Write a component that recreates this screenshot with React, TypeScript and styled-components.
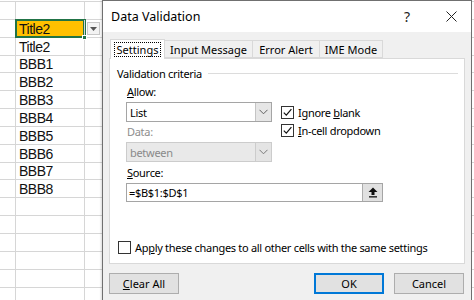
import React from "react";
import styled, { createGlobalStyle } from "styled-components";

const Global = createGlobalStyle`
  html, body { margin: 0; padding: 0; background: #fff; overflow: hidden; }
  #root { width: 474px; height: 300px; }
  * { box-sizing: border-box; }
`;

const Screen = styled.div`
  position: relative;
  width: 474px;
  height: 300px;
  overflow: hidden;
  background: #fff;
`;

const Sheet = styled.div`
  display: flex;
  flex-direction: column;
  padding-top: 1px;
  font-family: "Liberation Sans", Arial, sans-serif;
  font-size: 14px;
  letter-spacing: -0.5px;
  color: #111;
`;

const Row = styled.div`
  display: flex;
  height: 17.85px;
  flex: none;
  border-top: 1px solid #d6d6d6;
`;

const CellA = styled.div`
  width: 16px;
  flex: none;
  border-right: 1px solid #d6d6d6;
`;

const CellB = styled.div<{ $selected?: boolean }>`
  position: relative;
  width: 69px;
  flex: none;
  border-right: 1px solid #d6d6d6;
  padding: 0 0 0 3px;
  display: flex;
  align-items: flex-end;
  padding-bottom: 0px;
  line-height: 16px;
  background: ${(p) => (p.$selected ? "#ffc000" : "transparent")};
  box-shadow: ${(p) => (p.$selected ? "0 0 0 1px #217346, inset 0 0 0 1px #217346" : "none")};
  z-index: ${(p) => (p.$selected ? 1 : 0)};
`;

const Handle = styled.span`
  position: absolute;
  right: -3px;
  bottom: -3px;
  width: 5px;
  height: 5px;
  background: #217346;
  border: 1px solid #fff;
`;

const CellC = styled.div`
  flex: 1;
`;

const CellDrop = styled.div`
  position: absolute;
  left: 87px;
  top: 22px;
  width: 13px;
  height: 13px;
  background: #f3f3f3;
  border: 1px solid #c8c8c8;
  display: flex;
  align-items: center;
  justify-content: center;
  z-index: 2;
`;

const Dialog = styled.div`
  position: absolute;
  left: 102px;
  top: 0;
  width: 370px;
  height: 304px;
  background: #f0f0f0;
  border: 1px solid #707070;
  box-shadow: -1px 0 2px rgba(0, 0, 0, 0.15);
  display: flex;
  flex-direction: column;
  font-family: "Noto Sans", "Open Sans", sans-serif;
  font-size: 11px;
  letter-spacing: -0.3px;
  color: #000;
  z-index: 5;
`;

const TitleBar = styled.div`
  height: 31px;
  flex: none;
  background: #fff;
  display: flex;
  align-items: center;
  padding-left: 8px;
`;

const TitleText = styled.div`
  flex: 1;
  font-size: 12.5px;
  letter-spacing: 0;
`;

const TitleBtn = styled.div<{ $w: number }>`
  width: ${(p) => p.$w}px;
  height: 31px;
  display: flex;
  align-items: center;
  justify-content: center;
  font-size: 14px;
  color: #222;
`;

const Body = styled.div`
  flex: 1;
  display: flex;
  flex-direction: column;
  padding: 7px 7px 0 6px;
`;

const Tabs = styled.div`
  display: flex;
  align-items: flex-end;
  height: 19px;
  padding-left: 1px;
  position: relative;
  z-index: 1;
`;

const Tab = styled.div<{ $active?: boolean; $w: number }>`
  width: ${(p) => p.$w}px;
  height: ${(p) => (p.$active ? 20 : 18)}px;
  margin-bottom: ${(p) => (p.$active ? -1 : 0)}px;
  background: ${(p) => (p.$active ? "#fff" : "#f0f0f0")};
  border: 1px solid #d9d9d9;
  border-bottom: ${(p) => (p.$active ? "none" : "1px solid #d9d9d9")};
  margin-right: -1px;
  display: flex;
  align-items: center;
  justify-content: center;
  padding-bottom: ${(p) => (p.$active ? 1 : 0)}px;
  letter-spacing: 0;
`;

const Focus = styled.span`
  outline: 1px dotted #000;
  padding: 0 2px;
  line-height: 13px;
`;

const Panel = styled.div`
  height: 206px;
  width: 356px;
  background: #fff;
  border: 1px solid #d9d9d9;
  display: flex;
  flex-direction: column;
  padding: 7px 6px 0 7px;
`;

const GroupHead = styled.div`
  display: flex;
  align-items: center;
  height: 15px;
  &::after {
    content: "";
    flex: 1;
    height: 1px;
    background: #dcdcdc;
    margin-left: 6px;
  }
`;

const Fields = styled.div`
  display: flex;
  flex-direction: column;
  padding-left: 9px;
`;

const Label = styled.div<{ $disabled?: boolean; $top: number }>`
  margin-top: ${(p) => p.$top}px;
  padding-left: 1px;
  height: 14px;
  line-height: 14px;
  color: ${(p) => (p.$disabled ? "#8d8d8d" : "#000")};
`;

const U = styled.span`
  text-decoration: underline;
  text-underline-offset: 1px;
`;

const FieldRow = styled.div`
  display: flex;
  gap: 9px;
  margin-top: 3px;
`;

const LeftCol = styled.div`
  display: flex;
  flex-direction: column;
  width: 146px;
`;

const Select = styled.div<{ $disabled?: boolean; $top?: number }>`
  height: 20px;
  margin-top: ${(p) => p.$top ?? 0}px;
  display: flex;
  border: 1px solid ${(p) => (p.$disabled ? "#cccccc" : "#a5a5a5")};
  background: ${(p) => (p.$disabled ? "#e9e9e9" : "#fff")};
  color: ${(p) => (p.$disabled ? "#8a8a8a" : "#000")};
`;

const SelectText = styled.div`
  flex: 1;
  display: flex;
  align-items: center;
  padding-left: 3px;
`;

const SelectArrow = styled.div<{ $disabled?: boolean }>`
  width: 16px;
  display: flex;
  align-items: center;
  justify-content: center;
  background: ${(p) => (p.$disabled ? "#e4e4e4" : "#e6e6e6")};
  border-left: 1px solid ${(p) => (p.$disabled ? "#cccccc" : "#c4c4c4")};
`;

const RightCol = styled.div`
  display: flex;
  flex-direction: column;
  padding-top: 1px;
`;

const Check = styled.div<{ $h?: number }>`
  display: flex;
  align-items: center;
  height: ${(p) => p.$h ?? 18}px;
  gap: 4px;
`;

const Box = styled.span`
  width: 13px;
  height: 13px;
  border: 1px solid #333;
  background: #fff;
  display: flex;
  align-items: center;
  justify-content: center;
  flex: none;
`;

const SourceInput = styled.div`
  margin-top: 3px;
  width: 257px;
  height: 19px;
  display: flex;
  border: 1px solid #a5a5a5;
  background: #fff;
`;

const SourceText = styled.div`
  flex: 1;
  display: flex;
  align-items: center;
  padding-left: 2px;
`;

const RefBtn = styled.div`
  width: 20px;
  display: flex;
  align-items: center;
  justify-content: center;
  background: #e1e1e1;
  border-left: 1px solid #adadad;
`;

const ApplyRow = styled.div`
  margin-top: auto;
  margin-bottom: 9px;
  margin-left: 1px;
`;

const Buttons = styled.div`
  display: flex;
  margin-top: 9px;
  gap: 10px;
`;

const Btn = styled.div<{ $default?: boolean }>`
  width: 70px;
  height: 21px;
  background: #e1e1e1;
  border: 1px solid ${(p) => (p.$default ? "#0078d7" : "#adadad")};
  box-shadow: ${(p) => (p.$default ? "inset 0 0 0 1px #0078d7" : "none")};
  display: flex;
  align-items: center;
  justify-content: center;
  letter-spacing: 0;
`;

const Spacer = styled.div`
  flex: 1;
`;

const Chevron = ({ color = "#606060" }: { color?: string }) => (
  <svg width="9" height="6" viewBox="0 0 9 6">
    <path d="M0.5 0.8 L4.5 4.8 L8.5 0.8" fill="none" stroke={color} strokeWidth="1" />
  </svg>
);

const CheckMark = () => (
  <svg width="11" height="11" viewBox="0 0 11 11">
    <path d="M1.8 5.6 L4.3 8.2 L9.4 2.2" fill="none" stroke="#111" strokeWidth="1.2" />
  </svg>
);

const rows = ["", "Title2", "Title2", "BBB1", "BBB2", "BBB3", "BBB4", "BBB5", "BBB6", "BBB7", "BBB8", "", "", "", "", "", ""];

export default function App() {
  return (
    <>
      <Global />
      <Screen>
        <Sheet>
          {rows.map((t, i) => (
            <Row key={i}>
              <CellA />
              <CellB $selected={i === 1}>
                {t}
                {i === 1 && <Handle />}
              </CellB>
              <CellC />
            </Row>
          ))}
        </Sheet>
        <CellDrop>
          <svg width="7" height="4" viewBox="0 0 7 4">
            <path d="M0 0 L7 0 L3.5 4 Z" fill="#555" />
          </svg>
        </CellDrop>
        <Dialog>
          <TitleBar>
            <TitleText>Data Validation</TitleText>
            <TitleBtn $w={48}>?</TitleBtn>
            <TitleBtn $w={40}>
              <svg width="11" height="11" viewBox="0 0 11 11">
                <path d="M0.5 0.5 L10.5 10.5 M10.5 0.5 L0.5 10.5" stroke="#222" strokeWidth="1" />
              </svg>
            </TitleBtn>
          </TitleBar>
          <Body>
            <Tabs>
              <Tab $active $w={55}>
                <Focus>Settings</Focus>
              </Tab>
              <Tab $w={89}>Input Message</Tab>
              <Tab $w={68}>Error Alert</Tab>
              <Tab $w={64}>IME Mode</Tab>
            </Tabs>
            <Panel>
              <GroupHead>Validation criteria</GroupHead>
              <Fields>
                <Label $top={4}>
                  <U>A</U>llow:
                </Label>
                <FieldRow>
                  <LeftCol>
                    <Select>
                      <SelectText>List</SelectText>
                      <SelectArrow>
                        <Chevron />
                      </SelectArrow>
                    </Select>
                    <Label $disabled $top={3}>
                      Data:
                    </Label>
                    <Select $disabled $top={3}>
                      <SelectText>between</SelectText>
                      <SelectArrow $disabled>
                        <Chevron color="#7a7a7a" />
                      </SelectArrow>
                    </Select>
                  </LeftCol>
                  <RightCol>
                    <Check>
                      <Box>
                        <CheckMark />
                      </Box>
                      <span>
                        Ignore <U>b</U>lank
                      </span>
                    </Check>
                    <Check>
                      <Box>
                        <CheckMark />
                      </Box>
                      <span>
                        <U>I</U>n-cell dropdown
                      </span>
                    </Check>
                  </RightCol>
                </FieldRow>
                <Label $top={4}>
                  <U>S</U>ource:
                </Label>
                <SourceInput>
                  <SourceText>=$B$1:$D$1</SourceText>
                  <RefBtn>
                    <svg width="10" height="11" viewBox="0 0 10 11">
                      <path d="M5 0.5 L9.5 5 L6.5 5 L6.5 8 L3.5 8 L3.5 5 L0.5 5 Z" fill="#111" />
                      <rect x="1" y="9.2" width="8" height="1.3" fill="#111" />
                    </svg>
                  </RefBtn>
                </SourceInput>
              </Fields>
              <ApplyRow>
                <Check $h={14}>
                  <Box />
                  <span>
                    Ap<U>p</U>ly these changes to all other cells with the same settings
                  </span>
                </Check>
              </ApplyRow>
            </Panel>
            <Buttons>
              <Btn>
                <span>
                  <U>C</U>lear All
                </span>
              </Btn>
              <Spacer />
              <Btn $default>OK</Btn>
              <Btn>Cancel</Btn>
            </Buttons>
          </Body>
        </Dialog>
      </Screen>
    </>
  );
}
